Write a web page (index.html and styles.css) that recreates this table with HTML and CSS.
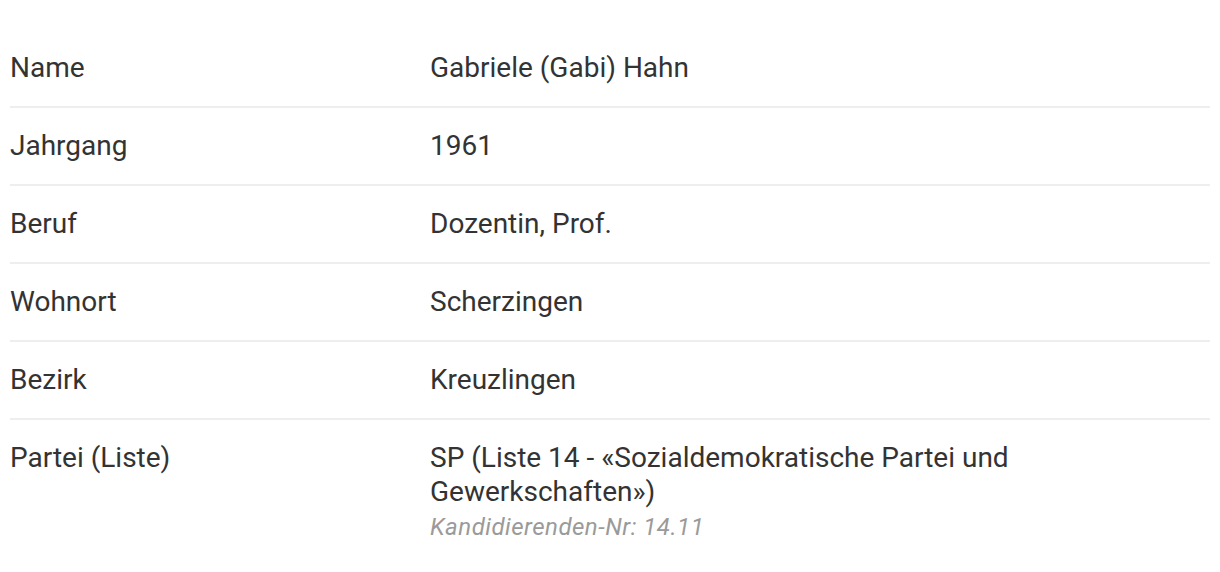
FILE: index.html
```html
<!DOCTYPE html>
<html lang="de">
<head>
<meta charset="utf-8">
<title>Kandidat</title>
<link rel="stylesheet" href="styles.css">
</head>
<body>
<div class="details">
  <div class="row">
    <div class="label">Name</div>
    <div class="value">Gabriele (Gabi) Hahn</div>
  </div>
  <div class="row">
    <div class="label">Jahrgang</div>
    <div class="value">1961</div>
  </div>
  <div class="row">
    <div class="label">Beruf</div>
    <div class="value">Dozentin, Prof.</div>
  </div>
  <div class="row">
    <div class="label">Wohnort</div>
    <div class="value">Scherzingen</div>
  </div>
  <div class="row">
    <div class="label">Bezirk</div>
    <div class="value">Kreuzlingen</div>
  </div>
  <div class="row last">
    <div class="label">Partei (Liste)</div>
    <div class="value">SP (Liste 14 - «Sozialdemokratische Partei und Gewerkschaften»)
      <div class="note">Kandidierenden-Nr: 14.11</div>
    </div>
  </div>
</div>
</body>
</html>
```

FILE: styles.css
```css
html, body {
  margin: 0;
  padding: 0;
  background: #fff;
}
body {
  font-family: Roboto, "Noto Sans", sans-serif;
  color: #333;
  font-size: 28px;
  line-height: 34px;
}
.details {
  padding: 30px 10px 0;
}
.row {
  display: grid;
  grid-template-columns: 420px 1fr;
  padding: 21px 0 21px;
  border-bottom: 2px solid #eeeeee;
}
.row.last {
  border-bottom: none;
}
.note {
  font-style: italic;
  font-size: 24px;
  line-height: 30px;
  letter-spacing: 0.5px;
  color: #9a9a9a;
  margin-top: 3px;
}
```
